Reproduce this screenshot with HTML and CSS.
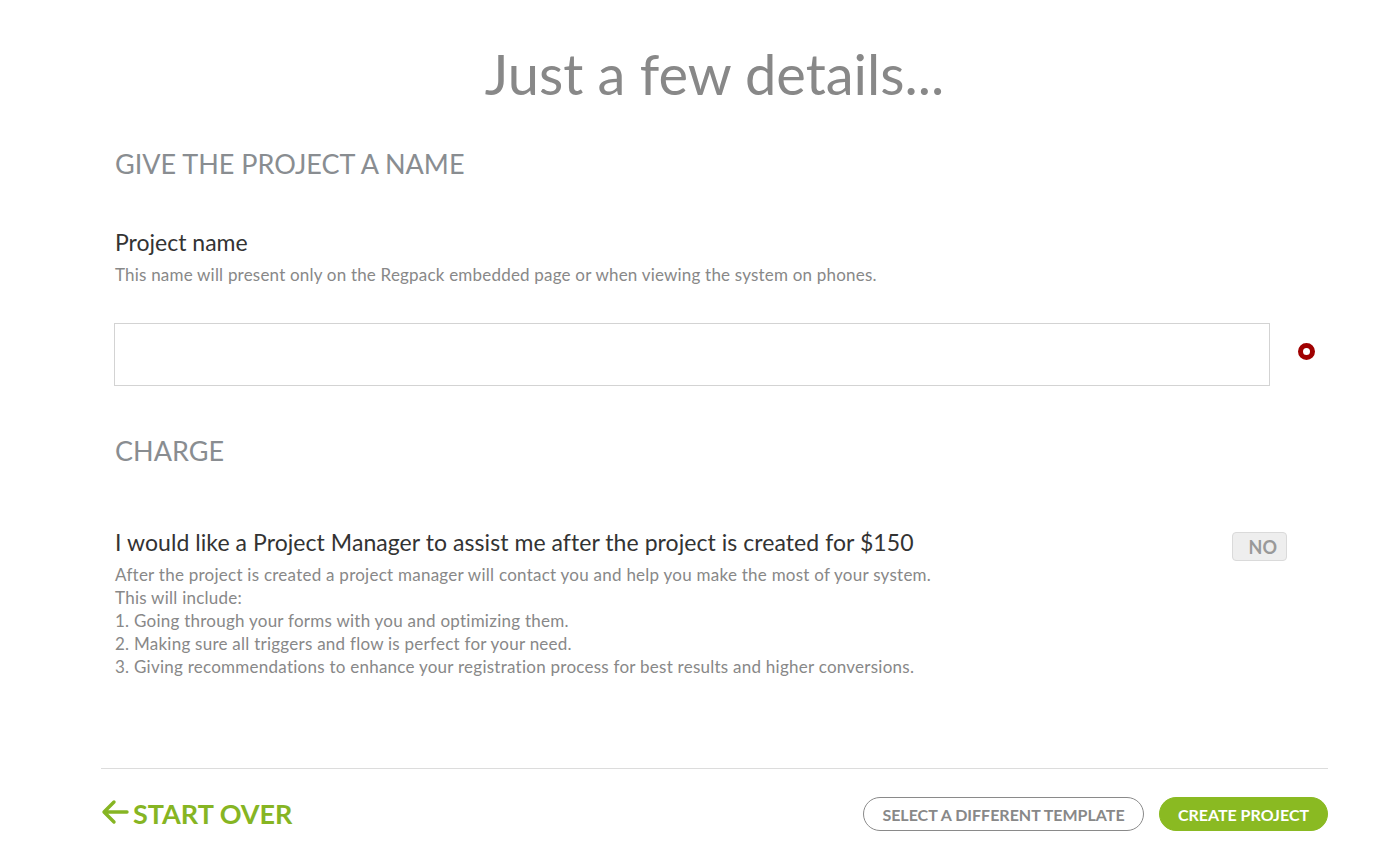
FILE: index.html
```html
<!DOCTYPE html>
<html>
<head>
<meta charset="utf-8">
<link rel="stylesheet" href="styles.css">
</head>
<body>
<div class="page">
  <h1 class="title">Just a few details...</h1>
  <div class="content">
    <h2 class="section">GIVE THE PROJECT A NAME</h2>
    <div class="field">
      <div class="label">Project name</div>
      <div class="desc">This name will present only on the Regpack embedded page or when viewing the system on phones.</div>
      <div class="input-row">
        <input class="input" type="text">
        <span class="req"></span>
      </div>
    </div>
    <h2 class="section charge">CHARGE</h2>
    <div class="option">
      <div class="option-text">
        <div class="label">I would like a Project Manager to assist me after the project is created for $150</div>
        <div class="desc lines">After the project is created a project manager will contact you and help you make the most of your system.<br>This will include:<br>1. Going through your forms with you and optimizing them.<br>2. Making sure all triggers and flow is perfect for your need.<br>3. Giving recommendations to enhance your registration process for best results and higher conversions.</div>
      </div>
      <div class="toggle">NO</div>
    </div>
  </div>
  <div class="footer">
    <a class="start-over"><svg width="28" height="26" viewBox="0 0 28 26"><path d="M26 13H4M13 3L3 13l10 10" fill="none" stroke="#86b523" stroke-width="3.4" stroke-linecap="round" stroke-linejoin="round"/></svg><span>START OVER</span></a>
    <div class="actions">
      <button class="btn btn-outline">SELECT A DIFFERENT TEMPLATE</button>
      <button class="btn btn-green">CREATE PROJECT</button>
    </div>
  </div>
</div>
</body>
</html>
```
FILE: styles.css
```css
html, body {
  margin: 0;
  padding: 0;
  background: #fff;
  font-family: Lato, "Open Sans", Arial, sans-serif;
}
.page {
  padding: 0 72px 0 101px;
}
.title {
  margin: 0;
  padding-top: 38px;
  text-align: center;
  font-size: 56px;
  font-weight: 400;
  line-height: 72px;
  color: #888888;
}
.content {
  padding: 0 0 0 14px;
}
.section {
  margin: 0;
  font-size: 27px;
  font-weight: 400;
  line-height: 32px;
  color: #898d91;
  padding-top: 38px;
}
.section.charge {
  padding-top: 49px;
}
.field {
  padding-top: 48px;
}
.label {
  font-size: 23px;
  line-height: 28px;
  color: #333;
}
.desc {
  font-size: 17px;
  letter-spacing: 0.2px;
  line-height: 23px;
  color: #888;
  margin-top: 7px;
}
.desc.lines {
  margin-top: 7px;
  letter-spacing: 0.25px;
}
.input-row {
  display: flex;
  align-items: center;
  margin-top: 37px;
}
.input {
  box-sizing: border-box;
  width: 1156px;
  height: 63px;
  border: 1px solid #d3d3d3;
  background: #fff;
  margin: 0 0 0 -1px;
  padding: 0 12px;
  font-size: 16px;
}
.req {
  width: 17px;
  height: 17px;
  box-sizing: border-box;
  border: 5px solid #a00000;
  border-radius: 50%;
  margin-left: 28px;
  margin-bottom: 6px;
}
.option {
  display: flex;
  justify-content: space-between;
  align-items: flex-start;
  padding-top: 61px;
  padding-right: 41px;
}
.option .label {
  font-size: 23px;
  line-height: 28px;
  letter-spacing: 0.06px;
}
.toggle {
  margin-top: 4px;
  box-sizing: border-box;
  width: 55px;
  height: 29px;
  background: #eeeeee;
  border: 1px solid #dadada;
  border-radius: 4px;
  color: #999;
  font-weight: 700;
  font-size: 18px;
  line-height: 29px;
  text-align: right;
  padding-right: 9px;
}
.footer {
  margin-top: 90px;
  border-top: 1px solid #dcdcdc;
  display: flex;
  justify-content: space-between;
  align-items: center;
  padding-top: 28px;
}
.start-over {
  display: flex;
  align-items: center;
  gap: 4px;
  color: #86b523;
  font-weight: 700;
  font-size: 27px;
  line-height: 32px;
}
.start-over svg {
  display: block;
  margin-top: -4px;
}
.actions {
  display: flex;
  gap: 15px;
}
.btn {
  font-family: Lato, "Open Sans", Arial, sans-serif;
  font-weight: 700;
  font-size: 16px;
  height: 34px;
  border-radius: 17px;
  padding: 0 10px;
  cursor: pointer;
}
.btn-outline {
  background: #fff;
  border: 1px solid #8a8a8a;
  color: #888;
  width: 281px;
}
.btn-green {
  background: #8aba22;
  border: 1px solid #8aba22;
  color: #fff;
  width: 169px;
}
```
